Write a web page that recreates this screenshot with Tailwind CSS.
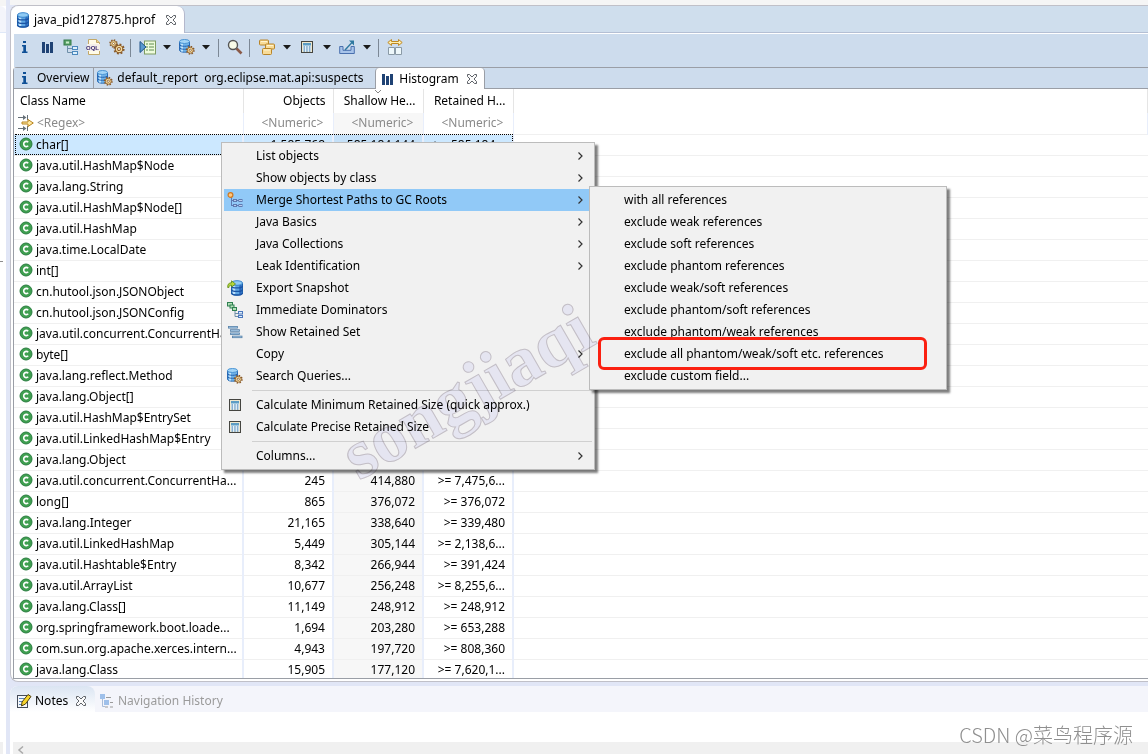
<!DOCTYPE html>
<html lang="en">
<head>
<meta charset="utf-8">
<title>java_pid127875.hprof</title>
<script src="https://cdn.jsdelivr.net/npm/@tailwindcss/browser@4"></script>
</head>
<body class="font-['Noto_Sans','Noto_Sans_CJK_SC',sans-serif] text-[12px] leading-4 text-black bg-[#e1e6f6]">
<svg class="hidden" aria-hidden="true">
  <symbol id="db" viewBox="0 0 16 16">
    <path d="M2.500 3v10c0 3 11 3 11 0V3" fill="#5da4e2" stroke="#1f62ad"/>
    <path d="M5 5.500v8.500" stroke="#b9defa" stroke-width="2.500"/>
    <path d="M11.500 5v9" stroke="#2a68bd" stroke-width="2.500"/>
    <path d="M2.500 6c0 2.600 11 2.600 11 0M2.500 9.500c0 2.600 11 2.600 11 0M2.500 13c0 2.600 11 2.600 11 0" fill="none" stroke="#1b54a4" stroke-width="1.300"/>
    <ellipse cx="8" cy="3" rx="5.500" ry="2.300" fill="#8fcaf4" stroke="#3b86cc"/>
  </symbol>
  <symbol id="gear" viewBox="0 0 16 16">
    <circle cx="8" cy="8" r="6" fill="none" stroke="#8a5a28" stroke-width="3" stroke-dasharray="2.400 2.300"/>
    <circle cx="8" cy="8" r="5" fill="#f8dfa0" stroke="#8a5a28" stroke-width="1.400"/>
    <circle cx="8" cy="8" r="1.900" fill="#fff" stroke="#8a5a28" stroke-width="1.400"/>
  </symbol>
  <symbol id="dbgear" viewBox="0 0 16 16">
    <path d="M.5 2.500v8.500c0 3 10 3 10 0V2.500" fill="#6fb2e8" stroke="#2d6db5"/>
    <path d="M3 4.500v8" stroke="#c2e4fb" stroke-width="2"/>
    <path d="M.5 5.500c0 2.400 10 2.400 10 0M.5 8.500c0 2.400 10 2.400 10 0" fill="none" stroke="#2463b0"/>
    <ellipse cx="5.500" cy="2.500" rx="5" ry="2" fill="#a3d5f7" stroke="#4a94d4"/>
    <use href="#gear" x="6.500" y="6.500" width="9.500" height="9.500"/>
  </symbol>
  <symbol id="info" viewBox="0 0 16 16"><path d="M6 2h3v2H6zM5 6h4v6.500h1.500V14H5v-1.500h1.300V7.500H5z" fill="#0f5096"/></symbol>
  <symbol id="bars" viewBox="0 0 16 16"><path d="M2 3h3v11H2zM6 5h3v9H6zM10 3h3v11h-3z" fill="#1f4274"/></symbol>
  <symbol id="domtree" viewBox="0 0 16 16"><path d="M4.500 7v6.500H9M4.500 9.500H9" fill="none" stroke="#6e8fa8"/><rect x="1" y="1" width="7" height="5" fill="#58a067" stroke="#347a48"/><path d="M3 2.500h3v2H3z" fill="#c9ecc9"/><rect x="9.500" y="7.500" width="5" height="3" fill="#dff0fb" stroke="#4c88bd"/><rect x="9.500" y="12.500" width="5" height="3" fill="#dff0fb" stroke="#4c88bd"/></symbol>
  <symbol id="cls" viewBox="0 0 14 14"><circle cx="7" cy="7" r="6" fill="#3f9f50" stroke="#2a7d40"/><path d="M9.200 5.200A2.600 2.600 0 1 0 9.200 8.800" fill="none" stroke="#fff" stroke-width="1.600"/></symbol>
  <symbol id="close" viewBox="0 0 12 12"><path d="M1.500 1.500h2L6 4l2.500-2.500h2v2L8 6l2.500 2.500v2h-2L6 8l-2.500 2.500h-2v-2L4 6 1.500 3.500z" fill="#fafafa" stroke="#5e6268"/></symbol>
  <symbol id="caret" viewBox="0 0 8 5"><path d="M0 0h8L4 4.500z" fill="#1a1a1a"/></symbol>
  <symbol id="chev" viewBox="0 0 8 8"><path d="M2.500.5 6 4 2.500 7.500" fill="none" stroke="#333" stroke-width="1.200"/></symbol>
  <symbol id="calc" viewBox="0 0 16 16"><rect x="2.500" y="2.500" width="11" height="11" fill="#eee8d0" stroke="#454540"/><path d="M4 4h8v8.500H4z" fill="#e4f1fa"/><path d="M4 4h8v2.500H4z" fill="#5c9cc4"/><path d="M4.500 8h8M4.500 10h8M4.500 12h8" stroke="#2f6fa4" stroke-dasharray="1.500 1.200"/></symbol>
  <symbol id="paths" viewBox="0 0 16 16"><path d="M4.500 5v9M4.500 8.500H7M4.500 13.500H7M10 8.500h2M10 13.500h2" fill="none" stroke="#5f79b0"/><circle cx="3.500" cy="3" r="2.400" fill="#ffc77d" stroke="#d07820" stroke-width="1.200"/><g fill="#b5cdf0" stroke="#5f79b0"><rect x="6.500" y="7.500" width="3" height="2"/><rect x="12" y="7.500" width="3" height="2"/><rect x="6.500" y="12.500" width="3" height="2"/><rect x="12" y="12.500" width="3" height="2"/></g></symbol>
  <symbol id="export" viewBox="0 0 16 16"><use href="#db" x="2" y="0" width="16" height="16"/><path d="M.7 7.500C.5 4 2 2.800 4.500 2.800V.8L8.500 4 4.500 7V5.200C2.500 5.200 2 6 2 7.500z" fill="#b8d838" stroke="#5f8a1c" stroke-width=".8"/></symbol>
  <symbol id="imm" viewBox="0 0 16 16"><g fill="#b4e0ba" stroke="#2f8050"><rect x=".5" y=".5" width="5" height="3.500"/><rect x="3" y="3" width="4" height="3"/><rect x="5.500" y="5.500" width="4" height="3"/></g><path d="M8 9v5.500h3M8 11.500h3" fill="none" stroke="#6e8fa8"/><rect x="11.500" y="9.500" width="4" height="2.500" fill="#dff0fb" stroke="#4c78bd"/><rect x="11.500" y="13.500" width="4" height="2" fill="#dff0fb" stroke="#4c78bd"/></symbol>
  <symbol id="retained" viewBox="0 0 16 16"><g fill="#a9cbe8" stroke="#5580a8" stroke-width=".8"><rect x="1.500" y="2.500" width="9" height="1.600"/><rect x="3.500" y="5.700" width="9" height="1.600"/><rect x="3.500" y="8.900" width="9" height="1.600"/><rect x="5.500" y="12.100" width="9.500" height="1.600"/></g></symbol>
</svg>

<div class="flex h-screen overflow-hidden">
  <div class="flex w-[6px] shrink-0 flex-col border-t-[6px] border-t-[#f5f5f5] bg-white">
    <div class="h-[27px] rounded-tr-md border-b border-[#dfe8f8] bg-[#f4f5fb]"></div>
    <div class="mr-[3px] flex-[9] border-b border-[#8c8c8c]"></div>
    <div class="flex-[19]"></div>
    <div class="mr-[3px] h-3 bg-[#f0f0f0]"></div>
  </div>
  <div class="ml-1 flex min-w-0 flex-1 flex-col border-t-[5px] border-t-[#f5f5f5]">

    <main class="flex min-h-0 flex-1 flex-col rounded-l-lg rounded-r-none border border-r-0 border-[#c0c0c8] bg-white">
      <div class="flex h-[27px] shrink-0 rounded-tl-lg border-b border-[#b4bfd4] bg-[#cfdeed]">
        <div class="-mb-px flex w-[174px] items-center gap-[3px] rounded-t-lg border-r border-[#b4b8cc] bg-white pl-1 pt-px">
          <svg class="size-4"><use href="#db"/></svg><span>java_pid127875.hprof</span>
          <button aria-label="Close" class="ml-[7px]"><svg class="size-3"><use href="#close"/></svg></button>
        </div>
      </div>

      <div class="ml-[3px] mt-px flex h-[33px] shrink-0 items-start bg-[#cddced] pt-[5px]" role="toolbar">
        <div class="flex h-4 items-center gap-[7px] pl-[3px]">
          <button aria-label="Overview"><svg class="size-4"><use href="#info"/></svg></button>
          <button aria-label="Histogram"><svg class="size-4"><use href="#bars"/></svg></button>
          <button aria-label="Dominator tree"><svg class="size-4"><use href="#domtree"/></svg></button>
          <button aria-label="OQL"><svg class="size-4" viewBox="0 0 16 16"><path d="M2.500.5h8l3 3v12h-11z" fill="#fffbe8" stroke="#c2a868"/><path d="M10.500.5v3h3" fill="#f0d890" stroke="#c2a868"/><path d="M1 5h13v7H1z" fill="#f4efe8"/><text x="0" y="11" font-size="6" font-weight="700" font-family="Liberation Sans" fill="#3c2a70">OQL</text></svg></button>
          <button aria-label="Queries"><svg class="size-4" viewBox="0 0 16 16"><use href="#gear" x="0" y="0" width="9" height="9"/><use href="#gear" x="4" y="4" width="12" height="12"/></svg></button>
        </div>
        <div class="ml-[5px] h-[18px] w-px bg-[#7c8896]"></div>
        <div class="flex h-4 items-center gap-[7px] pl-2">
          <button aria-label="Run reports"><svg class="size-[17px]" viewBox="0 0 17 16"><rect x="5.500" y="1.500" width="11" height="13" fill="#eefbdc" stroke="#7e9c62"/><path d="M7 4.500h2M7 7.500h2M7 10.500h2M10 4.500h5M10 7.500h5M10 10.500h5" stroke="#5f8c50"/><path d="M1 2v11l6-5.500z" fill="#5a9ad0" stroke="#205488"/></svg></button>
          <button aria-label="Reports menu"><svg class="h-[5px] w-2"><use href="#caret"/></svg></button>
          <button aria-label="Query browser"><svg class="ml-px size-4"><use href="#dbgear"/></svg></button>
          <button aria-label="Query browser menu"><svg class="h-[5px] w-2"><use href="#caret"/></svg></button>
        </div>
        <div class="ml-2 h-[18px] w-px bg-[#7c8896]"></div>
        <button aria-label="Search" class="ml-2"><svg class="size-4" viewBox="0 0 16 16"><path d="m9.500 9.500 5 5" stroke="#8a5a48" stroke-width="2.600"/><circle cx="6" cy="6" r="4.500" fill="#f8fbe8" stroke="#555" stroke-width="1.400"/></svg></button>
        <div class="ml-[6px] h-[18px] w-px bg-[#7c8896]"></div>
        <div class="flex h-4 items-center gap-2 pl-[9px]">
          <button aria-label="Group"><svg class="size-4" viewBox="0 0 16 16"><g fill="#f9dc98" stroke="#b88428"><rect x=".5" y="1" width="9" height="5" rx="1"/><rect x="6.500" y="5" width="9" height="5" rx="1"/><rect x="3.500" y="9.500" width="9" height="6" rx="1"/></g><path d="M2 2.500h6M8 6.500h6M5 11h6" stroke="#fff4d0"/></svg></button>
          <button aria-label="Group menu"><svg class="h-[5px] w-2"><use href="#caret"/></svg></button>
          <button aria-label="Calculate retained size"><svg class="size-4"><use href="#calc"/></svg></button>
          <button aria-label="Calculate menu"><svg class="h-[5px] w-2"><use href="#caret"/></svg></button>
          <button aria-label="Export"><svg class="size-4" viewBox="0 0 16 16"><path d="M4 7.500H.7v7h14.600v-7H12v3.800H4z" fill="#a8c4ea" stroke="#4a70ae"/><path d="m6 11 7-7.500" stroke="#2e78a0" stroke-width="1.400"/><path d="M10 1.500h5v5z" fill="#2e78a0"/></svg></button>
          <button aria-label="Export menu"><svg class="h-[5px] w-2"><use href="#caret"/></svg></button>
        </div>
        <div class="ml-[7px] h-[18px] w-px bg-[#7c8896]"></div>
        <button aria-label="Compare" class="ml-2"><svg class="size-4" viewBox="0 0 16 16"><path d="M.8 3.500 4.500.5v2h7v-2l3.700 3-3.700 3v-2h-7v2z" fill="#fff0b0" stroke="#c08a20"/><path d="M1.500 8.500h6v7h-6zM8.500 8.500h6v7h-6z" fill="#eef8fb" stroke="#8a9aa6"/></svg></button>
      </div>

      <section class="mb-[2px] ml-[2px] flex min-h-0 flex-1 flex-col rounded-tl border border-r-0 border-[#9a9ea6] bg-white">
        <div class="flex h-[21px] shrink-0 bg-[#cddced]" role="tablist">
          <button role="tab" class="flex items-center gap-1 border-b border-r border-[#9a9ea6] pl-[3px] pr-1"><svg class="size-4"><use href="#info"/></svg><span>Overview</span></button>
          <button role="tab" class="flex w-[281px] items-center gap-1 whitespace-pre border-b border-[#9a9ea6] pl-[3px]"><svg class="size-4 shrink-0"><use href="#dbgear"/></svg><span>default_report  org.eclipse.mat.api:suspects</span></button>
          <div role="tab" aria-selected="true" class="flex w-[110px] items-center gap-[3px] rounded-t border-x border-[#9a9ea6] bg-white pl-1"><svg class="size-4"><use href="#bars"/></svg><span>Histogram</span>
            <button aria-label="Close" class="ml-1"><svg class="size-3"><use href="#close"/></svg></button></div>
          <div class="flex-1 border-b border-[#9a9ea6]"></div>
        </div>
        <div class="relative min-h-0 flex-1 overflow-hidden">
          <svg class="absolute left-[360px] top-px h-1 w-2" viewBox="0 0 8 4"><path d="m1 0 3 3 3-3" fill="none" stroke="#888"/></svg>
          <table class="w-full table-fixed border-collapse text-right">
            <colgroup><col class="w-[229px]"><col class="w-[90px]"><col class="w-[90px]"><col class="w-[90px]"><col></colgroup>
            <thead>
              <tr class="h-[24px] *:border-r *:border-[#e5e5e5] *:p-0 *:font-normal">
                <th class="text-left"><div class="pl-[6px]">Class Name</div></th><th><div class="pr-[7px]">Objects</div></th><th><div class="pr-[7px]">Shallow He...</div></th><th><div class="pr-[7px]">Retained H...</div></th><td class="border-r-0"></td>
              </tr>
              <tr class="h-[21px] border-b border-[#f0f0f0] text-[#8a8a8a] *:border-r *:border-[#e8eefb] *:p-0">
                <td class="text-left"><div class="flex items-center gap-[3px] pl-1"><svg class="size-4" viewBox="0 0 16 16"><path d="M0 2.500h7M0 13.500h7M9.500 0v5M9.500 11v5" stroke="#667078"/><path d="m5 0 3.500 2.500L5 5M5 11l3.500 2.500L5 16" fill="#667078"/><path d="M4 7h6V4.500L15.300 8 10 11.500V9H4z" fill="#ffe9a0" stroke="#b88420"/></svg>&lt;Regex&gt;</div></td><td><div class="pr-[9px]">&lt;Numeric&gt;</div></td><td class="bg-[#f7f7f7]"><div class="pr-[9px]">&lt;Numeric&gt;</div></td><td><div class="pr-[9px]">&lt;Numeric&gt;</div></td><td class="border-r-0"></td>
              </tr>
            </thead>
            <tbody id="rows"></tbody>
          </table>
          <div class="pointer-events-none absolute left-px top-[45px] h-[21px] w-[498px] border border-dotted border-black"></div>
        </div>
      </section>
    </main>

    <section class="mt-1 flex h-[68px] shrink-0 flex-col rounded-tl-lg bg-white">
      <div class="flex h-[26px] rounded-tl-lg bg-[#f4f5fb]" role="tablist">
        <div role="tab" aria-selected="true" class="flex w-[85px] items-center gap-[3px] rounded-t-lg bg-linear-to-b from-[#dbe5f2] to-white pl-[6px] pt-1">
          <svg class="size-4" viewBox="0 0 16 16"><rect x="1.500" y="2.500" width="10" height="12" fill="#f4f8fc" stroke="#444c58"/><path d="M3 5.500h6M3 8.500h4M3 11.500h3" stroke="#5b86ba"/><path d="m6 9 6-7.500 3 2L9.500 11 5.500 13z" fill="#f6d52c" stroke="#504010"/></svg>
          <span>Notes</span><button aria-label="Close" class="ml-1"><svg class="size-3"><use href="#close"/></svg></button>
        </div>
        <button role="tab" class="flex items-center gap-[3px] pl-1 pt-1 text-[#9b9b9b]"><svg class="size-4" viewBox="0 0 16 16"><path d="M3.500 6v7.500H6" fill="none" stroke="#a9bcd8"/><path d="M1 1h5v5H1zM5 7h5v5H5z" fill="#9fc0ea"/><path d="M7 4.500h5M11 9.500h3M6 14h3M11 14h3" stroke="#9b9b9b"/></svg>Navigation History</button>
      </div>
      <div class="flex-1"></div>
      <div class="ml-[3px] flex h-3 items-center bg-[#f0f0f0] pl-1 pt-1"><svg class="size-2" viewBox="0 0 8 8"><path d="M6 .5 2 4l4 3.500" fill="none" stroke="#aaa" stroke-width="1.500"/></svg></div>
    </section>
  </div>
</div>

<div role="menu" id="menu" class="absolute left-[221px] top-[142px] w-[374px] border border-[#bcbcbc] bg-[#f1f1f1] p-[2px] shadow-[3px_3px_2px_rgba(0,0,0,0.5)]"></div>
<div role="menu" id="submenu" class="absolute left-[589px] top-[186px] w-[358px] border border-[#bcbcbc] bg-[#f1f1f1] p-[2px] shadow-[3px_3px_2px_rgba(0,0,0,0.5)]"></div>
<div class="pointer-events-none absolute left-[598px] top-[337px] h-[33px] w-[329px] rounded-md border-[3px] border-[#fb2011]"></div>
<svg class="pointer-events-none absolute left-[320px] top-[280px] h-[230px] w-[300px] mix-blend-multiply" viewBox="320 280 300 230"><text x="359" y="481" transform="rotate(-30 359 481)" font-family="Liberation Serif" font-weight="700" font-size="71" fill="#f3f3ff" stroke="#cfcad2" stroke-width="1">songjiaqi</text></svg>
<div class="pointer-events-none absolute bottom-[7px] right-[15px] font-['Noto_Sans_CJK_SC',sans-serif] text-[20px] font-light leading-6 text-[#8f8f8f]">CSDN @菜鸟程序源</div>

<script>
const rows = [
  ['char[]','1,585,768','585,184,144','>= 585,184...'],['java.util.HashMap$Node'],['java.lang.String'],['java.util.HashMap$Node[]'],['java.util.HashMap'],['java.time.LocalDate'],['int[]'],['cn.hutool.json.JSONObject'],['cn.hutool.json.JSONConfig'],['java.util.concurrent.ConcurrentHa...'],['byte[]'],['java.lang.reflect.Method'],['java.lang.Object[]'],['java.util.HashMap$EntrySet'],['java.util.LinkedHashMap$Entry'],['java.lang.Object'],
  ['java.util.concurrent.ConcurrentHa...','245','414,880','>= 7,475,6...'],['long[]','865','376,072','>= 376,072'],['java.lang.Integer','21,165','338,640','>= 339,480'],['java.util.LinkedHashMap','5,449','305,144','>= 2,138,6...'],['java.util.Hashtable$Entry','8,342','266,944','>= 391,424'],['java.util.ArrayList','10,677','256,248','>= 8,255,6...'],['java.lang.Class[]','11,149','248,912','>= 248,912'],['org.springframework.boot.loade...','1,694','203,280','>= 653,288'],['com.sun.org.apache.xerces.intern...','4,943','197,720','>= 808,360'],['java.lang.Class','15,905','177,120','>= 7,620,1...']];
document.getElementById('rows').innerHTML = rows.map(([n, a = '', b = '', c = ''], i) => {
  const s = i === 0 ? 'bg-[#cce8ff]' : '';
  const t = i === 0 ? 'bg-[#c4e0f8]' : 'bg-[#f7f7f7]';
  const cell = (v, k) => `<td class="border-r-2 border-[#e8eefb] p-0 ${k}"><div class="pr-[7px]">${v}</div></td>`;
  return `<tr class="h-[21px] border-b border-[#f0f0f0]"><td class="border-r-2 border-[#e8eefb] p-0 text-left ${s}"><div class="flex items-center gap-[3px] overflow-hidden whitespace-nowrap pl-[5px]"><svg class="mb-[2px] size-[14px] shrink-0"><use href="#cls"/></svg>${n}</div></td>${cell(a, s)}${cell(b, t)}${cell(c, s)}<td class="p-0"></td></tr>`;
}).join('');
const item = ([label, icon, sub, active]) => label === '-'
  ? '<div role="separator" class="ml-7 flex h-[7px] items-center"><div class="h-px flex-1 bg-[#d0d0d0]"></div></div>'
  : `<button role="menuitem" class="flex h-[22px] w-full items-center pl-[3px] pr-2 text-left ${active ? 'bg-[#91c9f7]' : ''}"><span class="mr-[13px] size-4">${icon ? `<svg class="size-4"><use href="#${icon}"/></svg>` : ''}</span><span class="flex-1">${label}</span>${sub ? '<svg class="size-2"><use href="#chev"/></svg>' : ''}</button>`;
document.getElementById('menu').innerHTML = [['List objects','',1],['Show objects by class','',1],['Merge Shortest Paths to GC Roots','paths',1,1],['Java Basics','',1],['Java Collections','',1],['Leak Identification','',1],['Export Snapshot','export'],['Immediate Dominators','imm'],['Show Retained Set','retained'],['Copy','',1],['Search Queries...','dbgear'],['-'],['Calculate Minimum Retained Size (quick approx.)','calc'],['Calculate Precise Retained Size','calc'],['-'],['Columns...','',1]].map(item).join('');
document.getElementById('submenu').innerHTML = ['with all references','exclude weak references','exclude soft references','exclude phantom references','exclude weak/soft references','exclude phantom/soft references','exclude phantom/weak references','exclude all phantom/weak/soft etc. references','exclude custom field...'].map(l => item([l])).join('');
</script>
</body>
</html>
